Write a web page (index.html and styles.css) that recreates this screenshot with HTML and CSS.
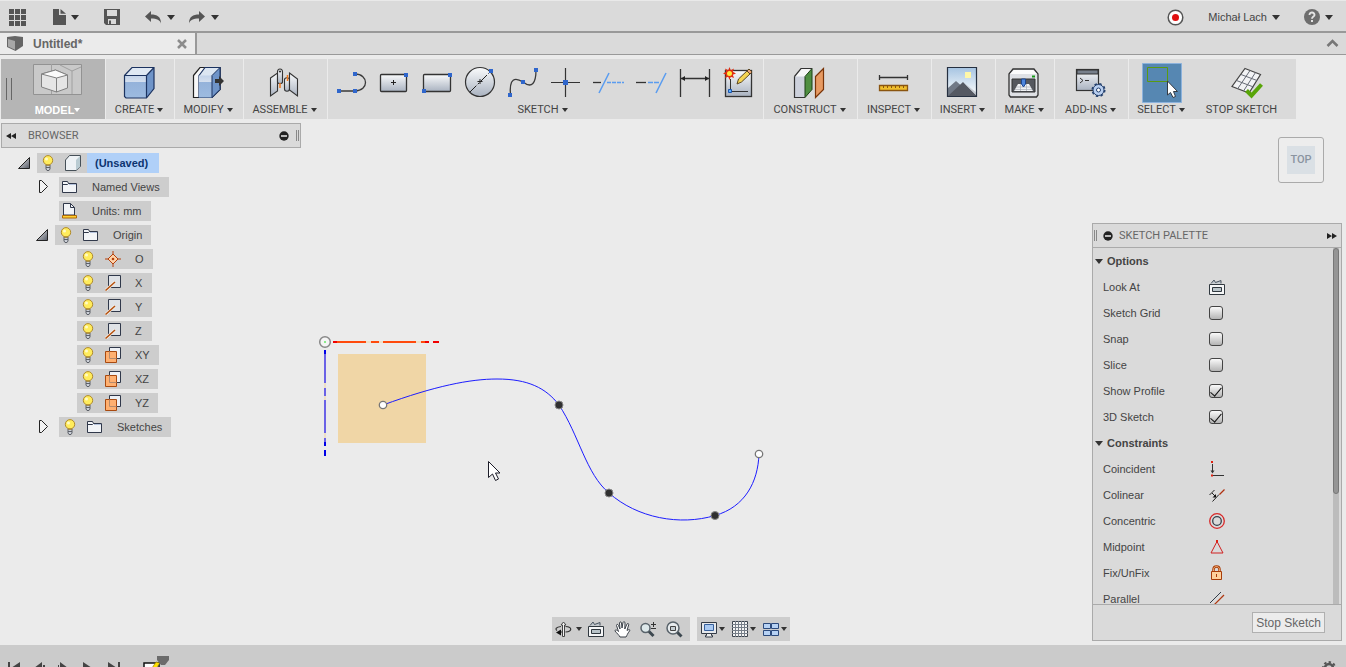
FILE: index.html
```html
<!DOCTYPE html>
<html lang="en">
<head>
<meta charset="utf-8">
<title>Untitled*</title>
<link rel="stylesheet" href="styles.css">
</head>
<body>
<svg class="defs" aria-hidden="true">
  <defs>
    <linearGradient id="steel" x1="0" y1="0" x2="0" y2="1"><stop offset="0" stop-color="#fafbfc"/><stop offset="1" stop-color="#a9b2c0"/></linearGradient>
    <linearGradient id="blue" x1="0" y1="0" x2="0" y2="1"><stop offset="0" stop-color="#c3d3ea"/><stop offset=".28" stop-color="#d4dfee"/><stop offset=".3" stop-color="#94b2da"/><stop offset="1" stop-color="#9dbbe0"/></linearGradient>
    <linearGradient id="twist" x1="0" y1="0" x2="1" y2="1"><stop offset="0" stop-color="#eee"/><stop offset="1" stop-color="#555a66"/></linearGradient>
    <linearGradient id="sky" x1="0" y1="0" x2="0" y2="1"><stop offset="0" stop-color="#a6c4e2"/><stop offset=".8" stop-color="#eef4f8"/></linearGradient>
  </defs>
  <symbol id="bulb" viewBox="0 0 12 16">
    <path d="M4 10h4v4l-1 1.500H5L4 14z" fill="#ccd0d8" stroke="#5c6068"/>
    <path d="M4 12.500h4" stroke="#5c6068"/>
    <circle cx="6" cy="5.300" r="4.700" fill="#ffec5c" stroke="#b08a2c"/>
    <path d="M4 10h4" stroke="#b08a2c"/>
    <circle cx="4.500" cy="4" r="1.500" fill="#fffbc8"/>
  </symbol>
  <symbol id="folder" viewBox="0 0 16 16">
    <path d="M.5 13.500v-11h5l1 2h8v9z" fill="#f2f4f7" stroke="#30384a"/>
    <path d="M.5 5.500h5l1-1" fill="none" stroke="#30384a"/><path d="M7 5.500h7" stroke="#b5c3dc"/>
  </symbol>
  <symbol id="axis" viewBox="0 0 16 16">
    <path d="M3.500.500h12v12h-12z" fill="#dfe2e6" stroke="#30384a"/>
    <path d="M0 16 10 7" stroke="#f4f0ea" stroke-width="3"/><path d="M.5 15.500 10 7" stroke="#b4500f" stroke-width="1.500"/>
  </symbol>
  <symbol id="plane" viewBox="0 0 16 16">
    <path d="M4.500.500h11v11h-11z" fill="#edf0f4" stroke="#30384a"/>
    <path d="M.5 4.500h11v11H.5z" fill="#ffb070" stroke="#a84a10"/>
    <path d="M4.500 4.500v7h7" fill="none" stroke="#b58a6c"/>
  </symbol>
  <symbol id="open" viewBox="0 0 12 12"><path d="M11.500.500v11H.5z" fill="url(#twist)" stroke="#222"/></symbol>
  <symbol id="closed" viewBox="0 0 12 14"><path d="M2.500.500v12h2l6-6-6-6z" fill="#f2f2f2" stroke="#222"/></symbol>
  <symbol id="lookat" viewBox="0 0 16 16">
    <path d="M2 4.500 5 1l1.500 2.500L12 1.500v3" fill="#bdc5cc" stroke="#4a5560"/>
    <path d="M.5 5.500h15v10H.5z" fill="#f5f6f7" stroke="#30383f"/><path d="M3.500 8.500h9v4h-9z" fill="#b9c4c9" stroke="#30383f"/>
  </symbol>
  <symbol id="collapse" viewBox="0 0 10 10"><circle cx="5" cy="5" r="4.700" fill="#222"/><path d="M2 5h6" stroke="#eee" stroke-width="1.500"/></symbol>
</svg>

<header class="appbar">
  <div class="appbar-group">
    <button class="plain" aria-label="Data panel"><svg width="18" height="18" viewBox="0 0 18 18"><path fill="#555" d="M0 1h5v5H0zM6 1h5v5H6zM12 1h5v5h-5zM0 7h5v5H0zM6 7h5v5H6zM12 7h5v5h-5zM0 13h5v5H0zM6 13h5v5H6zM12 13h5v5h-5z"/></svg></button>
    <button class="plain" aria-label="File"><svg width="14" height="16" viewBox="0 0 14 16"><path fill="#555" d="M1 0h6v6h7v10H1zM8.500 0 14 4.800H8.500z"/></svg><i class="caret"></i></button>
    <button class="plain" aria-label="Save"><svg width="16" height="16" viewBox="0 0 16 16"><path fill="#555" d="M0 0h16v16H2l-2-2z"/><path fill="#dadada" d="M3 1h10v6H3zM4 10h8v5H4z"/><path fill="#555" d="M5 11.500h2V15H5z"/></svg></button>
    <div class="history">
      <button class="plain" aria-label="Undo"><svg width="17" height="14" viewBox="0 0 17 14"><path fill="#555" d="M0 6.500 6 1v3.500c6 0 10 2 10 9-1-3.500-4-5-10-5V12z"/></svg><i class="caret"></i></button>
      <button class="plain" aria-label="Redo"><svg width="17" height="14" viewBox="0 0 17 14"><path fill="#555" d="M16 6.500 10 1v3.500c-6 0-10 2-10 9 1-3.500 4-5 10-5V12z"/></svg><i class="caret"></i></button>
    </div>
  </div>
  <div class="appbar-group account">
    <button class="plain" aria-label="Record"><svg width="17" height="17" viewBox="0 0 17 17"><circle cx="8.500" cy="8.500" r="7.300" fill="#fff" stroke="#555" stroke-width="1.500"/><circle cx="8.500" cy="8.500" r="3.500" fill="#e01010"/></svg></button>
    <button class="plain">Michał Lach<i class="caret"></i></button>
    <button class="plain" aria-label="Help"><svg width="16" height="16" viewBox="0 0 16 16"><circle cx="8" cy="8" r="8" fill="#6e6e6e"/><path d="M5.500 6c0-3.500 5.200-3 5 0C10.400 7.700 8 7.500 8 9.800" fill="none" stroke="#e4e4e4" stroke-width="1.900"/><path d="M7 11h2v2H7z" fill="#e4e4e4"/></svg><i class="caret"></i></button>
  </div>
</header>

<div class="tabbar">
  <div class="tab">
    <svg width="16" height="16" viewBox="0 0 16 16"><path d="M0 1 8 0l8 1v9l-7.500 5L0 11z" fill="#666"/><path d="M1 3 8 5v8.700L1 10.500z" fill="#a8a8a8"/></svg>
    <span class="tab-title">Untitled*</span>
    <button class="plain" aria-label="Close tab"><svg width="10" height="10" viewBox="0 0 10 10"><path d="m1 1 8 8M9 1 1 9" stroke="#8c8c8c" stroke-width="2.500"/></svg></button>
  </div>
  <button class="plain expand" aria-label="Collapse toolbar"><svg width="13" height="9" viewBox="0 0 13 9"><path d="m1.500 7 5-5 5 5" fill="none" stroke="#777" stroke-width="2.500"/></svg></button>
</div>

<nav class="toolbar">
  <button class="tool model">
    <svg width="49" height="36" viewBox="0 0 49 36"><path d="M.5.500h48v30H.5z" fill="#c9c9c9" stroke="#929292"/><path d="M18.500 0v30M27 1l12 6 9-4M39 7v23" fill="none" stroke="#a0a0a0"/><path d="m8.500 10 14-4 12 5v13l-11 4-15-5z" fill="#e5e5e5" stroke="#808080"/><path d="m8.500 10 14-4 12 5-11 3z" fill="#fafafa" stroke="#808080"/><path d="M23.500 14v14" stroke="#808080"/></svg>
    <span class="tool-label">MODEL<i class="caret"></i></span>
  </button>
  <button class="tool create">
    <svg width="36" height="36" viewBox="0 0 36 36"><path d="M2.500 11.500 10 3.500h22v21l-8 9.500H4l-1.500-1.500z" fill="#dfe8f3"/><path d="M24.500 11.500 32 3.500v21L24.500 34z" fill="#6f94c8"/><path d="M2.500 11.500h22V34H4l-1.500-1.500z" fill="url(#blue)"/><path d="M2.500 11.500 10 3.500h22v21L24.500 34H4l-1.500-1.500zM24.500 34V11.500l7.500-8M2.500 11.500h22" fill="none" stroke="#1c3360" stroke-width="1.200"/></svg>
    <span class="tool-label">CREATE<i class="caret"></i></span>
  </button>
  <button class="tool modify">
    <svg width="36" height="36" viewBox="0 0 36 36"><path d="M2.500 11.500 9 3.500h20v22L21 33.500H2.500z" fill="#f8f8f8" stroke="#222" stroke-width="1.200"/><path d="m8 11.500 6-8h15v22l-8 8H8z" fill="#dce6f2" stroke="#1c3360" stroke-width="1.200"/><path d="M8 11.500h13v22H8z" fill="url(#blue)"/><path d="m21 11.500 8-8v22l-8 8z" fill="#6f94c8" stroke="#1c3360"/><path d="M24 15h4v-3l5 5-5 5v-3h-4z" fill="#333"/></svg>
    <span class="tool-label">MODIFY<i class="caret"></i></span>
  </button>
  <button class="tool assemble">
    <svg width="36" height="36" viewBox="0 0 36 36"><g fill="url(#steel)" stroke="#333" stroke-width="1.100"><path d="m2.500 14 7-5v18l-7 5z"/><path d="M9.500 8c0-4 5-4 5 0v10c0 2-5 2-5 0z"/><path d="M16.500 16c0-3 5-3 5 0v9c0 3-5 3-5 0z"/><path d="m21.500 9 8 6v17l-8-6z"/></g><circle cx="12" cy="7.500" r="1" fill="#222"/><path d="M12 19v5M19.500 11v6" stroke="#f07a20" stroke-width="1.500"/></svg>
    <span class="tool-label">ASSEMBLE<i class="caret"></i></span>
  </button>
  <div class="tool sketch">
    <div class="sketch-tools">
      <button class="plain" aria-label="Line"><svg width="36" height="36" viewBox="0 0 36 36"><path d="M5 27h16c14 0 14-17 0-17" fill="none" stroke="#3a3a3a" stroke-width="1.300"/><path d="M3 25h4v4H3zM19 25h4v4h-4zM19 8h4v4h-4z" fill="#2f66cc"/></svg></button>
      <button class="plain" aria-label="Center rectangle"><svg width="36" height="36" viewBox="0 0 36 36"><rect x="3.500" y="10.500" width="26" height="17" rx="1" fill="url(#steel)" stroke="#333" stroke-width="1.300"/><path d="M14 18.500h5M16.500 16v5" stroke="#222"/><path d="M27 9h4v4h-4z" fill="#2f66cc"/></svg></button>
      <button class="plain" aria-label="Rectangle"><svg width="36" height="36" viewBox="0 0 36 36"><rect x="3.500" y="10.500" width="27" height="17" rx="1" fill="url(#steel)" stroke="#333" stroke-width="1.300"/><path d="M28 9h4v4h-4zM2 25h4v4H2z" fill="#2f66cc"/></svg></button>
      <button class="plain" aria-label="Circle"><svg width="36" height="36" viewBox="0 0 36 36"><circle cx="17" cy="18" r="14.500" fill="url(#steel)" stroke="#333" stroke-width="1.200"/><path d="M7 28 28 7" stroke="#222" stroke-dasharray="9 2 2 2"/><path d="M14.500 17.500h5M17 15v5" stroke="#222"/><path d="M26 5h4v4h-4z" fill="#2f66cc"/></svg></button>
      <button class="plain" aria-label="Spline"><svg width="36" height="36" viewBox="0 0 36 36"><path d="M4.500 31C3 14 9 13 17 18c9 7 13 1 13-12" fill="none" stroke="#3a3a3a" stroke-width="1.300"/><path d="M2 29h4v4H2zM15 16h4v4h-4zM28 4h4v4h-4z" fill="#2f66cc"/></svg></button>
      <button class="plain" aria-label="Point"><svg width="36" height="36" viewBox="0 0 36 36"><path d="M2 18.500h29M16.500 4v29" stroke="#333" stroke-width="1.200"/><path d="M14 16h5v5h-5z" fill="#2f66cc"/></svg></button>
      <button class="plain" aria-label="Trim"><svg width="36" height="36" viewBox="0 0 36 36"><path d="M1 18.500h8" stroke="#333" stroke-width="1.300"/><path d="M7 29 17 9" stroke="#5a9cf0" stroke-width="1.500"/><path d="M15 18.500h17" stroke="#5a9cf0" stroke-width="1.300" stroke-dasharray="4 1"/></svg></button>
      <button class="plain" aria-label="Extend"><svg width="36" height="36" viewBox="0 0 36 36"><path d="M1 18.500h10" stroke="#333" stroke-width="1.300"/><path d="m21 29 10-20" stroke="#5a9cf0" stroke-width="1.500"/><path d="M13 18.500h12" stroke="#5a9cf0" stroke-width="1.300" stroke-dasharray="5 1"/></svg></button>
      <button class="plain" aria-label="Sketch dimension"><svg width="36" height="36" viewBox="0 0 36 36"><path d="M2.500 5v28M31.500 5v28M3 14.500h28" stroke="#333" stroke-width="1.300"/><path d="m3 14.500 4-2.500v5zM31 14.500 27 12v5z" fill="#222"/></svg></button>
      <button class="plain" aria-label="Create sketch"><svg width="36" height="36" viewBox="0 0 36 36"><rect x="4.500" y="6.500" width="26" height="26" fill="url(#steel)" stroke="#333" stroke-width="1.300"/><path d="M9.500 15v12.500H27" fill="none" stroke="#333"/><path d="M7.500 25.500h3v3h-3z" fill="#5ab0ff" stroke="#1a55b0"/><path d="m8.500 3 1.300 3.200L13 4.500l-1.200 3.300L15 9.500l-3.200 1.300 1.200 3.200-3.200-1.200L8.500 16l-1.300-3.200L4 14l1.200-3.200L2 9.500l3.200-1.700L4 4.500l3.200 1.700z" fill="#e02c10"/><circle cx="8.500" cy="9.500" r="2.500" fill="#ffe93c"/><path d="m16 20 1.500-5L28 5l3 3-10.500 10z" fill="#f6d552" stroke="#5a4520"/><path d="m26 7 2-2 3 3-2 2z" fill="#e9a27c" stroke="#5a4520"/></svg></button>
    </div>
    <button class="plain tool-label">SKETCH<i class="caret"></i></button>
  </div>
  <button class="tool construct">
    <svg width="36" height="36" viewBox="0 0 36 36"><path d="M1.500 12.500 8 4.500h11v21L12 33.500H1.500z" fill="#f7f7f7"/><path d="M1.500 12.500H12v21H1.500z" fill="#cdd1dc"/><path d="m12 12.500 7-8v21l-7 8z" fill="#4f8f42" stroke="#1d4017"/><path d="M1.500 12.500 8 4.500h11M12 33.500H1.500v-21" fill="none" stroke="#333" stroke-width="1.200"/><path d="m22.500 12.500 8-8v21l-8 8z" fill="#e79a62" stroke="#7a3408" stroke-width="1.200"/></svg>
    <span class="tool-label">CONSTRUCT<i class="caret"></i></span>
  </button>
  <button class="tool inspect">
    <svg width="36" height="36" viewBox="0 0 36 36"><path d="M2.500 11v5M30.500 11v5M2 13.500h28" stroke="#333" stroke-width="1.300"/><path d="M2.500 21.500h28v5h-28z" fill="#f0bf2c" stroke="#8a5510" stroke-width="1.300"/><path d="M6.500 22v2M10.500 22v2M14.500 22v2M18.500 22v2M22.500 22v2M26.500 22v2" stroke="#8a5510"/></svg>
    <span class="tool-label">INSPECT<i class="caret"></i></span>
  </button>
  <button class="tool insert">
    <svg width="36" height="36" viewBox="0 0 36 36"><path d="M1.500 3.500h29v29h-29z" fill="url(#sky)"/><path d="M19 8h6v6h-6z" fill="#fff7a8"/><path d="m2 24 8-7 9 8 2 7H2z" fill="#717986"/><path d="m2 32 15-14 14 14z" fill="#555962"/><path d="m17 18 14 14V29z" fill="#c7ccd4"/><path d="M1.500 3.500h29v29h-29z" fill="none" stroke="#263040" stroke-width="1.200"/></svg>
    <span class="tool-label">INSERT<i class="caret"></i></span>
  </button>
  <button class="tool make">
    <svg width="36" height="36" viewBox="0 0 36 36"><path d="m2 10 4-5h21l4 5v21l-1.500 2h-26L2 31z" fill="#dfe1e5" stroke="#333" stroke-width="1.300"/><path d="m3 10 4-4h19l4 4z" fill="#fcfcfc"/><path d="M5 15h23v13H5z" fill="#55585e" stroke="#333"/><path d="m7 27 4-7h11l4 7z" fill="#f0f2f4"/><path d="M9 23h15M8 25.500h17M13.500 20v7M19.500 20v7" stroke="#aab0b8" stroke-width=".7"/><path d="M14.500 15h4v5l-2 3-2-3z" fill="#4d86dc" stroke="#1c4690"/><path d="M25 11.500h3v2h-3z" fill="#169a16"/></svg>
    <span class="tool-label">MAKE<i class="caret"></i></span>
  </button>
  <button class="tool addins">
    <svg width="36" height="36" viewBox="0 0 36 36"><rect x="2.500" y="5.500" width="22" height="21" fill="url(#steel)" stroke="#333" stroke-width="1.200"/><path d="M3 6h21v4H3z" fill="#777f8b" stroke="#333"/><path d="m6 14 3 2.500L6 19M11 16.500h4" fill="none" stroke="#333"/><circle cx="24.500" cy="26" r="5.500" fill="#b9cff0" stroke="#24406e"/><circle cx="24.500" cy="26" r="6.300" fill="none" stroke="#24406e" stroke-width="1.500" stroke-dasharray="2.500 2.450"/><circle cx="24.500" cy="26" r="2" fill="#fff" stroke="#24406e"/></svg>
    <span class="tool-label">ADD-INS<i class="caret"></i></span>
  </button>
  <button class="tool select">
    <svg width="40" height="40" viewBox="0 0 40 40"><path d="M.5.500h39v39H.5z" fill="#5687b2" stroke="#8cb2dc"/><path d="M5.500 4.500h20v14h-20z" fill="none" stroke="#5a9a12"/><path d="M25.500 18v14l3-2.500 2.500 5 2.500-1-2-5h4z" fill="#fff" stroke="#333b44"/></svg>
    <span class="tool-label">SELECT<i class="caret"></i></span>
  </button>
  <button class="tool stop">
    <svg width="40" height="36" viewBox="0 0 40 36"><path d="M22 4.500 37.500 10.500 26 29 9 22.500z" fill="#f2f3f5" stroke="#444" stroke-width="1.200"/><path d="M32.500 8.500 20.500 27M27 6.500 14.500 25M18 10.500l16 6M13.500 16.500l17 6.500" stroke="#666b75"/><path d="m23.500 26.500 5 5 10-11" fill="none" stroke="#58a508" stroke-width="4"/></svg>
    <span class="tool-label">STOP SKETCH</span>
  </button>
</nav>

<main class="workspace">
  <svg class="canvas" role="img" aria-label="Sketch canvas">
    <g transform="translate(325 223)">
      <path d="M13 12h88v89H13z" fill="#f0d6a6"/>
      <g fill="none" stroke-width="2">
        <path d="M8 0h33M46 0h8M58 0h33M96 0h8" stroke="#ff4a0c"/><path d="M8 0h4M100 0h4M108 0h6" stroke="#f00000"/><path d="M41 0h5M54 0h4M91 0h5" stroke="#f2d3a0" stroke-width="1"/>
        <path d="M0 8v33M0 46v8M0 58v33M0 96v8" stroke="#6a62e6"/><path d="M0 8v4M0 100v4M0 108v6" stroke="#0000e8"/><path d="M0 41v5M0 54v4M0 91v5" stroke="#f2d3a0" stroke-width="1"/>
      </g>
      <circle r="5.300" fill="#f5f5f5" stroke="#888" stroke-width="1.500"/><circle r=".8" fill="#00e000"/>
      <path d="M58 63C110 44 145 37 172 37C203 37 221 46 234 63C254 93 261 132 284 151C312 176 355 184 390 173.500C420 165 433 140 434 112" fill="none" stroke="#1c1cff"/>
      <g fill="#fff" stroke="#777" stroke-width="1.300"><circle cx="58" cy="63" r="3.700"/><circle cx="434" cy="112" r="3.700"/></g>
      <g fill="#303030" stroke="#888"><circle cx="234" cy="63" r="4"/><circle cx="284" cy="151" r="4"/><circle cx="390" cy="173.500" r="4"/></g>
      <path d="M163.500 119.500v16l4-3.500 3 6.500 3-1.500-3-6h4.500z" fill="#fff" stroke="#1c1c28"/>
    </g>
  </svg>

  <aside class="browser">
    <div class="panel-head">
      <svg width="10" height="8" viewBox="0 0 10 8"><path d="M5 1v6L0 4zM10 1v6L5 4z" fill="#222"/></svg>
      <h2>BROWSER</h2>
      <svg width="10" height="10"><use href="#collapse"/></svg><i class="grip"></i>
    </div>
    <div class="tree">
      <div class="node root"><svg class="twisty" width="12" height="12"><use href="#open"/></svg><div class="chip active"><svg width="12" height="16"><use href="#bulb"/></svg><svg width="16" height="16" viewBox="0 0 16 16"><path d="m.5 5 4-4.500h11v11L11 15.500H.5z" fill="#eef2f5" stroke="#465058"/><path d="m11 5 4-4v11l-4 3z" fill="#b9cbd2"/></svg><span>(Unsaved)</span></div></div>
      <div class="node child"><svg class="twisty" width="12" height="14"><use href="#closed"/></svg><div class="chip slim"><svg width="16" height="16"><use href="#folder"/></svg><span>Named Views</span></div></div>
      <div class="node child"><div class="chip slim"><svg width="16" height="16" viewBox="0 0 16 16"><path d="M1.500 12V.500h7l4 4V12z" fill="#f2f4f7" stroke="#30384a"/><path d="M8.500.500v4h4" fill="none" stroke="#30384a"/><path d="M.5 12.500h14v2.500H.5z" fill="#ffd030" stroke="#b06a08"/></svg><span>Units: mm</span></div></div>
      <div class="node origin"><svg class="twisty" width="12" height="12"><use href="#open"/></svg><div class="chip"><svg width="12" height="16"><use href="#bulb"/></svg><svg width="16" height="16"><use href="#folder"/></svg><span>Origin</span></div></div>
      <div class="node leaf"><div class="chip"><svg width="12" height="16"><use href="#bulb"/></svg><svg width="16" height="16" viewBox="0 0 16 16"><path d="M8 0v16M0 8h16" stroke="#b4400c"/><path d="m8 3 5 5-5 5-5-5z" fill="#ffd2a8" stroke="#b4400c"/><circle cx="8" cy="8" r="1.300" fill="#b4400c"/></svg><span>O</span></div></div>
      <div class="node leaf"><div class="chip"><svg width="12" height="16"><use href="#bulb"/></svg><svg width="16" height="16"><use href="#axis"/></svg><span>X</span></div></div>
      <div class="node leaf"><div class="chip"><svg width="12" height="16"><use href="#bulb"/></svg><svg width="16" height="16"><use href="#axis"/></svg><span>Y</span></div></div>
      <div class="node leaf"><div class="chip"><svg width="12" height="16"><use href="#bulb"/></svg><svg width="16" height="16"><use href="#axis"/></svg><span>Z</span></div></div>
      <div class="node leaf"><div class="chip"><svg width="12" height="16"><use href="#bulb"/></svg><svg width="16" height="16"><use href="#plane"/></svg><span>XY</span></div></div>
      <div class="node leaf"><div class="chip"><svg width="12" height="16"><use href="#bulb"/></svg><svg width="16" height="16"><use href="#plane"/></svg><span>XZ</span></div></div>
      <div class="node leaf"><div class="chip"><svg width="12" height="16"><use href="#bulb"/></svg><svg width="16" height="16"><use href="#plane"/></svg><span>YZ</span></div></div>
      <div class="node child"><svg class="twisty" width="12" height="14"><use href="#closed"/></svg><div class="chip"><svg width="12" height="16"><use href="#bulb"/></svg><svg width="16" height="16"><use href="#folder"/></svg><span>Sketches</span></div></div>
    </div>
  </aside>

  <div class="side">
    <button class="viewcube"><span>TOP</span></button>
    <aside class="palette">
      <div class="panel-head">
        <i class="grip"></i><svg width="10" height="10"><use href="#collapse"/></svg>
        <h2>SKETCH PALETTE</h2>
        <svg width="10" height="8" viewBox="0 0 10 8"><path d="M0 1v6l5-3zM5 1v6l5-3z" fill="#222"/></svg>
      </div>
      <div class="palette-body">
        <div class="options">
          <h3><i class="caret"></i>Options</h3>
          <button class="plain option"><span>Look At</span><svg width="16" height="16"><use href="#lookat"/></svg></button>
          <label class="option"><span>Sketch Grid</span><input type="checkbox"></label>
          <label class="option"><span>Snap</span><input type="checkbox"></label>
          <label class="option"><span>Slice</span><input type="checkbox"></label>
          <label class="option"><span>Show Profile</span><input type="checkbox" checked></label>
          <label class="option"><span>3D Sketch</span><input type="checkbox" checked></label>
          <h3><i class="caret"></i>Constraints</h3>
          <button class="plain option"><span>Coincident</span><svg width="16" height="16" viewBox="0 0 16 16"><path d="M3.500 3v8M4 14.500h11" stroke="#333"/><path d="M1.500 9.500h4l-2 3z" fill="#333"/><path d="M2 0h2v2H2zM2 13.500h2v2H2z" fill="#e02010"/></svg></button>
          <button class="plain option"><span>Colinear</span><svg width="16" height="16" viewBox="0 0 16 16"><path d="m.5 8 5-5M3.500 14.500l6.500-7M3 6l3 3" stroke="#222"/><path d="M7 10.500V7l-3.500 3.500z" fill="#111"/><path d="m10.500 7.500 5-5" stroke="#b03010" stroke-width="1.300"/></svg></button>
          <button class="plain option"><span>Concentric</span><svg width="16" height="16" viewBox="0 0 16 16"><circle cx="8" cy="8" r="7.300" fill="none" stroke="#d82828" stroke-width="1.300"/><circle cx="8" cy="8" r="4.300" fill="none" stroke="#36424c" stroke-width="1.300"/></svg></button>
          <button class="plain option"><span>Midpoint</span><svg width="16" height="16" viewBox="0 0 16 16"><path d="m8 2.500 6 11.500H2z" fill="none" stroke="#d02020"/><path d="M7 1h2v2H7z" fill="#e02010"/></svg></button>
          <button class="plain option"><span>Fix/UnFix</span><svg width="16" height="16" viewBox="0 0 16 16"><path d="M4.500 7V4.500c0-4 6-4 6 0V7" fill="none" stroke="#a83c08" stroke-width="2.500"/><path d="M4.500 7V4.500c0-4 6-4 6 0V7" fill="none" stroke="#ffc890" stroke-width=".8"/><path d="M2.500 6.500h10v8h-10z" fill="#ffd09c" stroke="#a83c08"/><path d="M7.500 9v3" stroke="#a83c08"/></svg></button>
          <button class="plain option"><span>Parallel</span><svg width="16" height="16" viewBox="0 0 16 16"><path d="m1 12 11-11" stroke="#333c48"/><path d="M4 15 15 4" stroke="#b03810" stroke-width="1.200"/></svg></button>
        </div>
        <div class="scroll"><div class="thumb"></div></div>
      </div>
      <div class="palette-foot"><button class="finish">Stop Sketch</button></div>
    </aside>
  </div>

  <div class="navbar">
    <div class="nav-group">
      <button class="plain orbit" aria-label="Orbit"><svg width="17" height="17" viewBox="0 0 17 17"><path d="M10.500 5.500c7 .5 7 5 0 5.500M6 5.500C1 6 0 8 2 9.500M5 11h5" fill="none" stroke="#333" stroke-width="1.200"/><path d="M8.500 1 6 4h1.500v11.500h2V4H11z" fill="#f4f4f4" stroke="#444"/><path d="m1 11.500 5-3v6z" fill="#111"/></svg><i class="caret"></i></button>
      <button class="plain nav-icon" aria-label="Look at"><svg width="16" height="16"><use href="#lookat"/></svg></button>
      <button class="plain nav-icon" aria-label="Pan"><svg width="17" height="17" viewBox="0 0 17 17"><path d="M6 16c-1-2-3-3.500-5-6 0-1.500 1.500-1.500 3.500.5L2.500 4.500c0-1.500 1.500-1.500 2 0L6 8 5.500 2c.3-1.500 1.700-1.500 2 0L8 7l1-5.500c.5-1.300 2-1 2 .5L10.800 8l2.200-5c.8-1 2-.5 1.700.8L13 9.500c2-1.500 3.500-1 2.500.5-2 2.500-2.500 4.500-3.500 6z" fill="#fff" stroke="#3a4048"/></svg></button>
      <button class="plain nav-icon" aria-label="Zoom"><svg width="17" height="17" viewBox="0 0 17 17"><circle cx="5.500" cy="7" r="4.500" fill="#dde8ea" stroke="#59636b" stroke-width="1.500"/><path d="m9 10.500 4.500 4.500" stroke="#3d4850" stroke-width="3"/><path d="M11 3.500h5M13.500 1v5M11 7.500h5" stroke="#333"/></svg></button>
      <button class="plain nav-icon" aria-label="Fit"><svg width="17" height="17" viewBox="0 0 17 17"><circle cx="7" cy="7" r="6" fill="#e8ecee" stroke="#59636b" stroke-width="1.500"/><path d="M4.500 5.500h5v4h-5z" fill="#c4cdd2" stroke="#444"/><path d="m11.500 11.500 4 4" stroke="#3d4850" stroke-width="3"/></svg></button>
    </div>
    <div class="nav-group">
      <button class="plain nav-menu" aria-label="Display settings"><svg width="17" height="17" viewBox="0 0 17 17"><path d="M.5 1.500h15v11H.5z" fill="#e6e9ed" stroke="#333b46"/><path d="M3.500 3.500h9v6h-9z" fill="#a9c9f2" stroke="#36609c"/><path d="M5.500 12.500h5v2h1v1.500h-7v-1.500h1z" fill="#eee" stroke="#333b46"/></svg><i class="caret"></i></button>
      <button class="plain nav-menu" aria-label="Grid and snaps"><svg width="17" height="17" viewBox="0 0 17 17"><path d="M.5.500h15v15H.5z" fill="#f5f5f5" stroke="#3c434c"/><path d="M3.500 0v16M6.500 0v16M9.500 0v16M12.500 0v16M0 3.500h16M0 6.500h16M0 9.500h16M0 12.500h16" stroke="#767e88"/></svg><i class="caret"></i></button>
      <button class="plain nav-menu" aria-label="Viewports"><svg width="17" height="17" viewBox="0 0 17 17"><path d="M.5 2.500h7v5h-7zM8.500 2.500h7v5h-7zM.5 9.500h7v5h-7zM8.500 9.500h7v5h-7z" fill="#b7d2f4" stroke="#2c4a7c"/></svg><i class="caret"></i></button>
    </div>
  </div>
</main>

<footer class="timeline">
  <div class="playback">
    <button class="plain" aria-label="Start"><svg width="13" height="12" viewBox="0 0 13 12"><path d="M0 0h2v12H0zM12 0v12L3 6z" fill="#444"/></svg></button>
    <button class="plain" aria-label="Step back"><svg width="13" height="12" viewBox="0 0 13 12"><path d="M9 0v12L1 6zM10 3h2v6h-2z" fill="#444"/></svg></button>
    <button class="plain" aria-label="Step forward"><svg width="13" height="12" viewBox="0 0 13 12"><path d="M2 0v12l8-6zM-1 3h2v6h-2z" fill="#444"/></svg></button>
    <button class="plain" aria-label="Play"><svg width="13" height="12" viewBox="0 0 13 12"><path d="M0 0v12l9-6z" fill="#444"/></svg></button>
    <button class="plain" aria-label="End"><svg width="13" height="12" viewBox="0 0 13 12"><path d="M0 0v12l9-6zM10 0h2v12h-2z" fill="#444"/></svg></button>
  </div>
  <button class="plain feature" aria-label="Sketch feature"><svg width="28" height="18" viewBox="0 0 28 18"><path d="M1 7h15v11H1z" fill="#fff" stroke="#111" stroke-width="1.500"/><path d="m7 15 6-9 4 1-7 10z" fill="#ffe000" stroke="#776500" stroke-width=".6"/><path d="M14 0h12v4l-4 5h-4l-4-5z" fill="#6b6b6b"/></svg></button>
  <button class="plain settings" aria-label="Timeline settings"><svg width="14" height="14" viewBox="0 0 14 14"><circle cx="7" cy="7" r="4" fill="none" stroke="#555" stroke-width="2.500"/><circle cx="7" cy="7" r="6" fill="none" stroke="#555" stroke-width="2" stroke-dasharray="2.400 2.300" stroke-dashoffset="1"/></svg></button>
</footer>
</body>
</html>
```
FILE: styles.css
```css
* { box-sizing: border-box; }

body {
  margin: 0;
  height: 100vh;
  display: flex;
  flex-direction: column;
  overflow: hidden;
  background: #ebebeb;
  color: #444;
  font: 11px/14px "Liberation Sans", Arial, sans-serif;
}

svg { display: block; flex: none; }
.defs { position: absolute; width: 0; height: 0; }

button { font: inherit; color: inherit; }

.plain {
  display: flex;
  align-items: center;
  padding: 0;
  border: 0;
  background: none;
}

.caret {
  flex: none;
  width: 0;
  height: 0;
  border: 4px solid transparent;
  border-top: 5px solid #333;
  border-bottom: 0;
}

h2, h3 { margin: 0; }

/* Application bar */
.appbar {
  flex: none;
  display: flex;
  justify-content: space-between;
  height: 33px;
  padding: 2px 13px 0 9px;
  border-top: 1px solid #e9e9e9;
  border-bottom: 2px solid #999;
  background: #dadada;
}
.appbar-group { display: flex; align-items: center; gap: 25px; }
.appbar .plain { gap: 5px; }
.history { display: flex; gap: 14px; }
.account { gap: 24px; }

/* Document tabs */
.tabbar {
  flex: none;
  display: flex;
  justify-content: space-between;
  height: 22px;
  padding-right: 7px;
  border-bottom: 1px solid #999;
  background: #dadada;
}
.tab {
  display: flex;
  align-items: center;
  gap: 10px;
  width: 197px;
  padding: 0 8px 0 7px;
  border-right: 2px solid #999;
  background: #ebebeb;
}
.tab-title { flex: 1; color: #666; font-size: 12px; font-weight: bold; }

/* Toolbar */
.toolbar {
  flex: none;
  display: flex;
  gap: 1px;
  margin: 4px 0 0 1px;
}
.tool {
  flex: none;
  display: flex;
  flex-direction: column;
  align-items: center;
  gap: 4px;
  height: 60px;
  padding: 5px 0 3px;
  border: 0;
  background: #dadada;
}
.tool-label {
  display: flex;
  align-items: center;
  gap: 3px;
  padding-right: 2px;
  font: 11px/12px Roboto, "Liberation Sans", sans-serif;
  white-space: nowrap;
}
.tool-label .caret { border-width: 4px 3px 0; }
.model {
  position: relative;
  width: 104px;
  padding-left: 9px;
  background: #b5b5b5;
  color: #fff;
}
.model .tool-label { gap: 0; padding-right: 0; font: bold 11px/12px "Liberation Sans", sans-serif; }
.model .caret { border-top-color: #fff; }
.model::before {
  content: "";
  position: absolute;
  left: 5px;
  top: 19px;
  width: 4px;
  height: 22px;
  border: solid #666;
  border-width: 0 1px;
}
.create, .modify { width: 68px; }
.assemble { width: 83px; }
.sketch { width: 435px; padding-left: 2px; padding-right: 2px; }
.sketch-tools { display: flex; align-self: stretch; }
.sketch-tools .plain { flex: 1; justify-content: center; }
.sketch > .tool-label { padding-right: 6px; }
.construct { width: 93px; }
.inspect { width: 73px; }
.insert { width: 63px; }
.make { width: 58px; }
.addins { width: 73px; }
.select { width: 66px; gap: 1px; padding-top: 4px; }
.stop { width: 101px; margin-left: -1px; padding-right: 6px; }

/* Workspace */
.workspace {
  position: relative;
  flex: 1;
  min-height: 0;
  display: flex;
  justify-content: space-between;
}
.canvas { position: absolute; inset: 0; width: 100%; height: 100%; }

.panel-head {
  flex: none;
  display: flex;
  align-items: center;
  height: 25px;
  background: #dadada;
}
.panel-head h2 {
  flex: 1;
  color: #666;
  font: 11px/14px Roboto, "Liberation Sans", sans-serif;
}
.grip { width: 3px; height: 11px; border: solid #888; border-width: 0 1px; }

.browser { position: relative; width: 300px; margin: 4px 0 0 1px; }
.browser .panel-head {
  gap: 7px;
  padding: 0 1px 0 4px;
  border: 1px solid #aaa;
}
.browser .panel-head h2 { padding-left: 5px; }

.tree { display: flex; flex-direction: column; gap: 4px; padding-top: 5px; }
.node { display: flex; align-items: center; justify-content: flex-start; }
.twisty { margin: 0 7px 0 3px; }
.root { padding-left: 14px; }
.child { padding-left: 36px; }
.child .twisty { margin: 0 10px 0 0; }
.child > .chip:first-child { margin-left: 22px; }
.origin { padding-left: 32px; }
.leaf { padding-left: 76px; }
.chip {
  display: flex;
  align-items: center;
  height: 20px;
  min-width: 75px;
  padding: 0 9px 0 5px;
  background: #cdcdcd;
}
.chip svg + svg { margin-left: 11px; }
.chip span { margin-left: 14px; }
.slim { padding-left: 3px; }
.active { padding-right: 0; }
.active span {
  margin-left: 6px;
  padding: 3px 11px 3px 8px;
  background: #b0d0f8;
  color: #0c3470;
  font-weight: bold;
}

.side {
  position: relative;
  display: flex;
  flex-direction: column;
  gap: 40px;
  width: 254px;
  padding: 18px 4px 4px 0;
}
.viewcube {
  align-self: flex-end;
  flex: none;
  width: 46px;
  height: 46px;
  margin-right: 18px;
  padding: 8px;
  border: 1px solid #aaa;
  border-radius: 3px;
  background: #ededed;
  color: #8a94a0;
  font: 500 11px/28px Roboto, sans-serif;
}
.viewcube span { display: block; background: #dae0e5; }

.palette {
  flex: 1;
  min-height: 0;
  display: flex;
  flex-direction: column;
  border: 1px solid #aaa;
  background: #dadada;
}
.palette .panel-head { gap: 6px; padding: 0 4px 0 1px; border-bottom: 1px solid #aaa; height: 24px; }
.palette-body { flex: 1; min-height: 0; display: flex; justify-content: space-between; padding-right: 2px; }
.options { flex: 1; overflow: hidden; }
.options h3 {
  display: flex;
  align-items: center;
  gap: 4px;
  height: 26px;
  padding-left: 2px;
  font-size: 11px;
}
.option {
  display: flex;
  align-items: center;
  width: 100%;
  height: 26px;
  padding-left: 10px;
}
.option span { width: 106px; text-align: left; }
.option input {
  appearance: none;
  display: grid;
  place-items: start center;
  width: 14px;
  height: 14px;
  margin: 0;
  border: 1px solid #444;
  border-radius: 3px;
  background: linear-gradient(#fafafa, #b4b4b4);
}
.option input:checked::after {
  content: "";
  width: 5px;
  height: 10px;
  border: solid #111;
  border-width: 0 1px 1px 0;
  transform: rotate(40deg);
}
.scroll { width: 6px; background: #bcbcbc; }
.thumb { height: 69%; border: 1px solid #777; border-radius: 3px; background: #959595; }
.palette-foot {
  flex: none;
  display: flex;
  justify-content: flex-end;
  padding: 7px 16px;
  border-top: 1px solid #aaa;
}
.finish {
  height: 21px;
  padding: 0 3px;
  border: 1px solid #b0b0b0;
  background: #ececec;
  color: #666;
  font-size: 12px;
}

/* View controls float over the canvas */
.navbar {
  position: absolute;
  left: 0;
  right: 4px;
  bottom: 4px;
  display: flex;
  justify-content: center;
  gap: 7px;
  pointer-events: none;
}
.nav-group { display: flex; height: 24px; background: #cdcdcd; pointer-events: auto; }
.nav-group .caret { border-width: 4px 3px 0; }
.nav-group:first-child { padding: 0 3px; }
.orbit { gap: 4px; width: 28px; }
.nav-icon { justify-content: center; width: 26px; }
.nav-menu { justify-content: center; gap: 1px; width: 31px; }

/* Timeline */
.timeline {
  flex: none;
  display: flex;
  align-items: flex-start;
  height: 22px;
  padding: 0 10px 0 8px;
  overflow: hidden;
  background: #cbcbcb;
}
.playback { display: flex; gap: 12px; padding-top: 17px; }
.feature { margin-left: 22px; padding-top: 11px; }
.settings { margin-left: auto; padding-top: 16px; }
```
